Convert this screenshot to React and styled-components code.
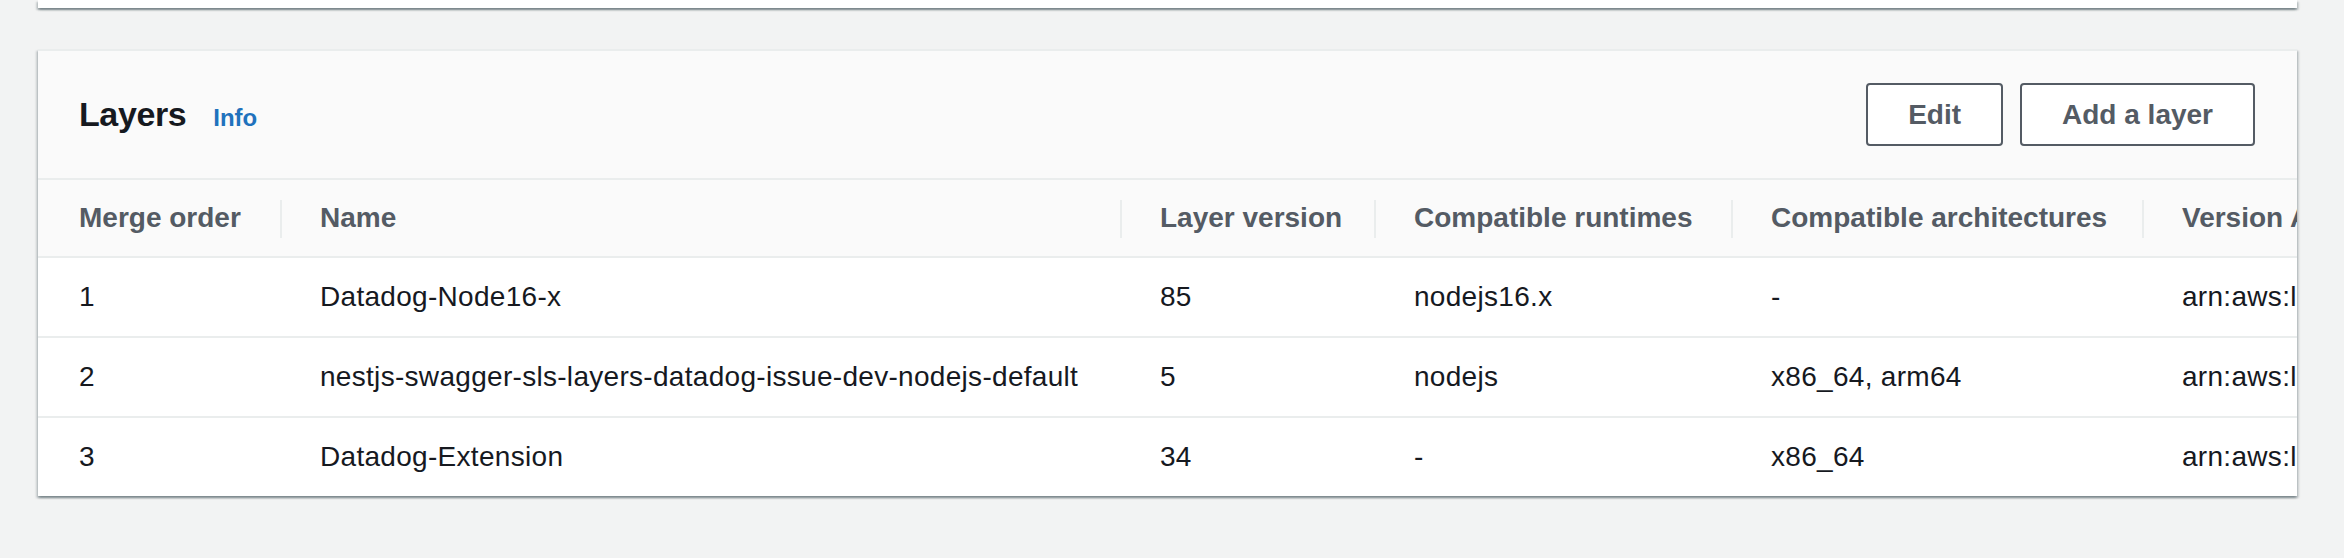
import React from "react";
import styled, { createGlobalStyle } from "styled-components";

const GlobalStyle = createGlobalStyle`
  html, body {
    margin: 0;
    padding: 0;
    background: #f2f3f3;
    font-family: "Liberation Sans", Arial, sans-serif;
    -webkit-font-smoothing: antialiased;
  }
`;

const Page = styled.div`
  width: 2344px;
  height: 558px;
  box-sizing: border-box;
  padding: 0 47px 0 38px;
  display: flex;
  flex-direction: column;
  gap: 41px;
  overflow: hidden;
`;

const shadow = `
  box-shadow: 0 2px 2px 0 rgba(0, 28, 36, 0.3),
    2px 2px 2px 0 rgba(0, 28, 36, 0.15),
    -2px 2px 2px 0 rgba(0, 28, 36, 0.15);
`;

const PrevCard = styled.div`
  height: 8px;
  background: #ffffff;
  ${shadow}
`;

const Card = styled.section`
  background: #ffffff;
  border-top: 2px solid #eaeded;
  ${shadow}
  overflow: hidden;
`;

const CardHeader = styled.header`
  height: 127px;
  box-sizing: content-box;
  background: #fafafa;
  border-bottom: 2px solid #eaeded;
  padding: 0 42px 0 41px;
  display: flex;
  align-items: center;
  justify-content: space-between;
`;

const TitleGroup = styled.div`
  display: flex;
  align-items: baseline;
  gap: 27px;
`;

const Title = styled.h2`
  margin: 0;
  font-size: 34px;
  font-weight: 700;
  letter-spacing: -0.4px;
  color: #16191f;
`;

const InfoLink = styled.a`
  font-size: 24px;
  font-weight: 700;
  color: #1f72bd;
  text-decoration: none;
  cursor: pointer;
`;

const Actions = styled.div`
  display: flex;
  gap: 17px;
`;

const Button = styled.button`
  height: 63px;
  padding: 0 40px;
  background: #ffffff;
  border: 2px solid #545b64;
  border-radius: 4px;
  color: #545b64;
  font-family: inherit;
  font-size: 28px;
  font-weight: 700;
  cursor: pointer;
`;

const TableScroll = styled.div`
  overflow: hidden;
`;

const Table = styled.table`
  table-layout: fixed;
  border-collapse: collapse;
  width: 2650px;
`;

const Col = styled.col`
  width: ${(p) => p.$w}px;
`;

const HeadCell = styled.th`
  position: relative;
  height: 76px;
  padding: 0 0 0 ${(p) => (p.$first ? 41 : 40)}px;
  background: #fafafa;
  border-bottom: 2px solid #eaeded;
  text-align: left;
  font-size: 28px;
  font-weight: 700;
  color: #545b64;
  white-space: nowrap;
  overflow: hidden;

  &::before {
    content: "";
    display: ${(p) => (p.$first ? "none" : "block")};
    position: absolute;
    left: 0;
    top: 20px;
    width: 2px;
    height: 38px;
    background: #eaeded;
  }
`;

const Row = styled.tr`
  & + & td {
    border-top: 2px solid #eaeded;
  }
`;

const Cell = styled.td`
  height: 78px;
  padding: 0 0 0 ${(p) => (p.$first ? 41 : 40)}px;
  font-size: 28px;
  letter-spacing: 0.3px;
  color: #16191f;
  white-space: nowrap;
  overflow: hidden;
  vertical-align: middle;
`;

const columns = [
  { label: "Merge order", w: 242 },
  { label: "Name", w: 840 },
  { label: "Layer version", w: 254 },
  { label: "Compatible runtimes", w: 357 },
  { label: "Compatible architectures", w: 411 },
  { label: "Version ARN", w: 546 },
];

const rows = [
  ["1", "Datadog-Node16-x", "85", "nodejs16.x", "-", "arn:aws:lambda:us-east-1:464622532012:layer:Datadog-Node16-x:85"],
  ["2", "nestjs-swagger-sls-layers-datadog-issue-dev-nodejs-default", "5", "nodejs", "x86_64, arm64", "arn:aws:lambda:us-east-1:000000000000:layer:nestjs-swagger-sls-layers:5"],
  ["3", "Datadog-Extension", "34", "-", "x86_64", "arn:aws:lambda:us-east-1:464622532012:layer:Datadog-Extension:34"],
];

export default function App() {
  return (
    <>
      <GlobalStyle />
      <Page>
        <PrevCard />
        <Card>
          <CardHeader>
            <TitleGroup>
              <Title>Layers</Title>
              <InfoLink>Info</InfoLink>
            </TitleGroup>
            <Actions>
              <Button>Edit</Button>
              <Button>Add a layer</Button>
            </Actions>
          </CardHeader>
          <TableScroll>
            <Table>
              <colgroup>
                {columns.map((c) => (
                  <Col key={c.label} $w={c.w} />
                ))}
              </colgroup>
              <thead>
                <tr>
                  {columns.map((c, i) => (
                    <HeadCell key={c.label} $first={i === 0}>
                      {c.label}
                    </HeadCell>
                  ))}
                </tr>
              </thead>
              <tbody>
                {rows.map((r) => (
                  <Row key={r[0]}>
                    {r.map((v, i) => (
                      <Cell key={i} $first={i === 0}>
                        {v}
                      </Cell>
                    ))}
                  </Row>
                ))}
              </tbody>
            </Table>
          </TableScroll>
        </Card>
      </Page>
    </>
  );
}
